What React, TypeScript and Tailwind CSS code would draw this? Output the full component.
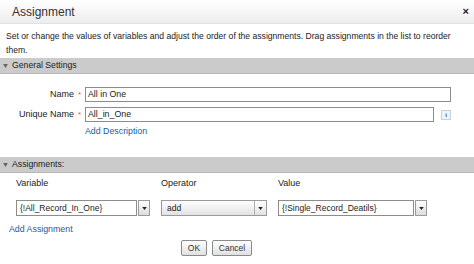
import React from "react";

const font = { fontFamily: '"Liberation Sans", Arial, sans-serif' };

function ArrowButton() {
  return (
    <div className="ml-[1px] flex h-[16px] w-[12px] items-center justify-center border border-[#9a9a9a] bg-gradient-to-b from-white to-[#dcdcdc]">
      <svg width="5" height="3" viewBox="0 0 6 4">
        <path d="M0 0h6L3 4z" fill="#222" />
      </svg>
    </div>
  );
}

function SectionBar({ title }: { title: string }) {
  return (
    <div className="flex h-[16px] items-center border-b border-[#b8b8b8] bg-[#cbcbcb] pl-[3px] text-[8.7px] text-[#222]">
      <svg width="5" height="4" viewBox="0 0 6 5" className="mr-[4px]">
        <path d="M0 0h6L3 5z" fill="#666" />
      </svg>
      {title}
    </div>
  );
}

export default function App() {
  return (
    <div className="h-[264px] w-[474px] overflow-hidden bg-white text-[#222]" style={font}>
      {/* Title bar */}
      <div className="flex h-[24px] items-center justify-between border-b border-[#e2e2e2] bg-gradient-to-b from-white to-[#ededed] pl-[12px] pr-[5px]">
        <span className="text-[12px] text-[#333]">Assignment</span>
        <span className="text-[11px] font-bold leading-none text-[#222]">×</span>
      </div>

      <p className="whitespace-nowrap px-[6px] pt-[5px] text-[8.6px] leading-[14px] text-[#222]">
        Set or change the values of variables and adjust the order of the assignments. Drag assignments in the list to reorder
        <br />
        them.
      </p>

      <div className="mt-[1px]">
        <SectionBar title="General Settings" />
      </div>

      {/* General settings */}
      <div className="mt-[13px] flex items-center">
        <span className="w-[74px] text-right text-[9px]">Name</span>
        <span className="w-[11px] text-center text-[8px] text-[#e05050]">*</span>
        <div className="flex h-[15px] w-[366px] items-center border border-[#8c8c8c] pl-[2px] text-[8.8px]">All in One</div>
      </div>
      <div className="mt-[5px] flex items-center">
        <span className="w-[74px] text-right text-[9px]">Unique Name</span>
        <span className="w-[11px] text-center text-[8px] text-[#e05050]">*</span>
        <div className="flex h-[15px] w-[349px] items-center border border-[#8c8c8c] pl-[2px] text-[8.8px]">All_in_One</div>
        <div className="ml-[7px] flex h-[10px] w-[10px] items-center justify-center border border-[#c3d3e3] bg-[#eef3f8] text-[6px] font-bold leading-none text-[#2a5a8a]">
          i
        </div>
      </div>
      <div className="mt-[2px] pl-[85px] text-[8.8px] leading-[14px] text-[#1a5aa6]">Add Description</div>

      <div className="mt-[19px]">
        <SectionBar title="Assignments:" />
      </div>

      {/* Assignments */}
      <div className="mt-[3px] flex pl-[16px] text-[9px] leading-[14px]">
        <span className="w-[145px]">Variable</span>
        <span className="w-[117px]">Operator</span>
        <span>Value</span>
      </div>
      <div className="mt-[10px] flex items-center pl-[16px] text-[8.5px]">
        <div className="flex w-[145px] items-center">
          <div className="flex h-[16px] w-[121px] items-center border border-[#8c8c8c] pl-[3px]">{"{!All_Record_In_One}"}</div>
          <ArrowButton />
        </div>
        <div className="flex w-[117px] items-center">
          <div className="flex h-[16px] w-[106px] items-center border border-[#9a9a9a] bg-gradient-to-b from-white to-[#e2e2e2]">
            <span className="flex-1 pl-[5px]">add</span>
            <div className="flex h-full w-[12px] items-center justify-center border-l border-[#b0b0b0]">
              <svg width="5" height="3" viewBox="0 0 6 4">
                <path d="M0 0h6L3 4z" fill="#222" />
              </svg>
            </div>
          </div>
        </div>
        <div className="flex items-center">
          <div className="flex h-[16px] w-[136px] items-center border border-[#8c8c8c] pl-[3px]">{"{!Single_Record_Deatils}"}</div>
          <ArrowButton />
        </div>
      </div>

      <div className="mt-[6px] pl-[9px] text-[8.8px] leading-[14px] text-[#1a5aa6]">Add Assignment</div>

      <div className="mt-[4px] flex pl-[181px] text-[8.5px]">
        <button className="flex h-[16px] w-[26px] items-center justify-center rounded-[2px] border border-[#8a8a8a] bg-gradient-to-b from-white to-[#e0e0e0] text-[#333]">
          OK
        </button>
        <button className="ml-[5px] flex h-[16px] w-[40px] items-center justify-center rounded-[2px] border border-[#8a8a8a] bg-gradient-to-b from-white to-[#e0e0e0] text-[#333]">
          Cancel
        </button>
      </div>
    </div>
  );
}
